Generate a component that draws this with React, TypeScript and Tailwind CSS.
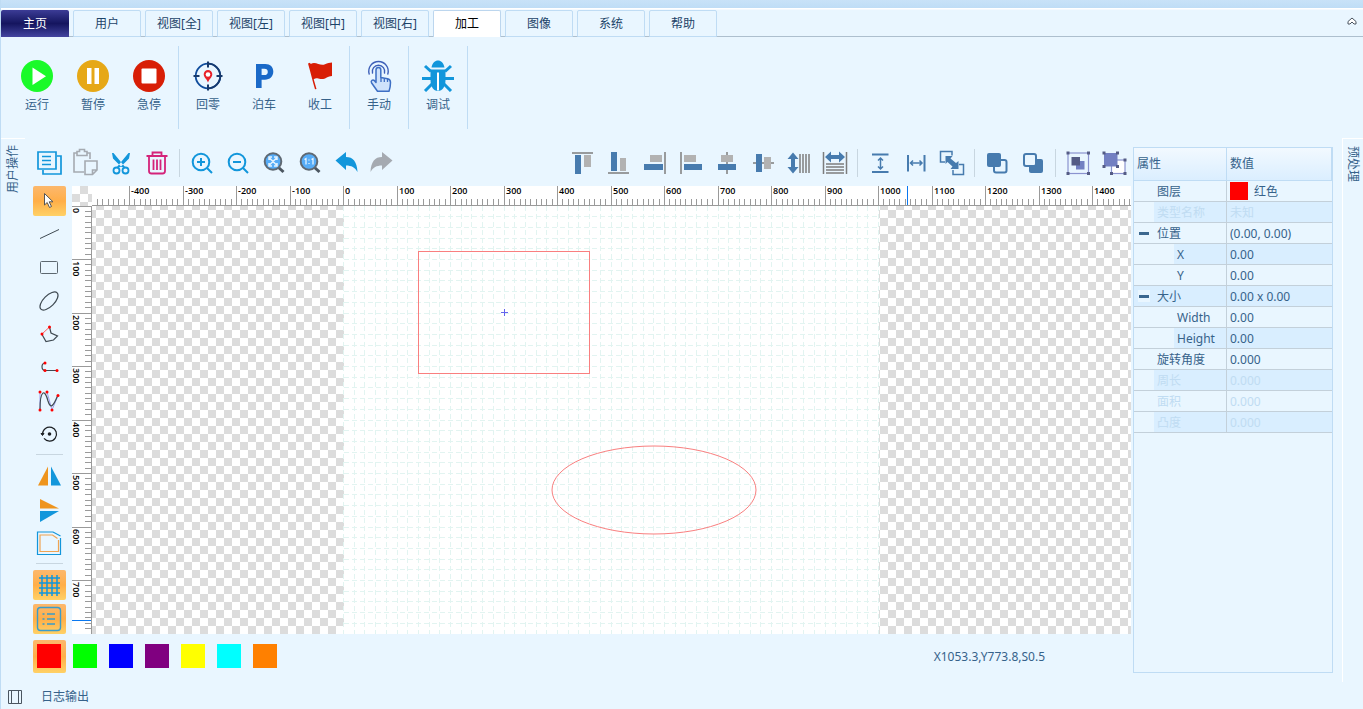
import React, { useLayoutEffect, useRef, useState } from "react";

const BLUE = "#1296db";
const STEEL = "#477bae";
const GRAY = "#b2b2b2";
const RULE = "#7d7d7d";

function Svg({ size = 32, children }: { size?: number; children: React.ReactNode }) {
  return (
    <svg width={size} height={size} viewBox={`0 0 ${size} ${size}`} fill="none" className="shrink-0" aria-hidden="true">
      {children}
    </svg>
  );
}

/* ---------- ribbon ---------- */

const ribbonIcons: Record<string, React.ReactNode> = {
  运行: (
    <Svg>
      <circle cx="16" cy="16" r="16" fill="#1afa29" />
      <path d="M11.5 7.5v17.500l13.500-8.700z" fill="#fff" />
    </Svg>
  ),
  暂停: (
    <Svg>
      <circle cx="16" cy="16" r="16" fill="#e6a817" />
      <path d="M10 8h4.500v16H10zM17.500 8H22v16h-4.500z" fill="#fff" />
    </Svg>
  ),
  急停: (
    <Svg>
      <circle cx="16" cy="16" r="16" fill="#d81e06" />
      <rect x="8.500" y="8.500" width="15" height="15" rx="1" fill="#fff" />
    </Svg>
  ),
  回零: (
    <Svg>
      <circle cx="16" cy="16" r="12.300" stroke="#0f4c9c" strokeWidth="1.800" />
      <path d="M16 3.700a12.300 12.300 0 0 1 0 24.600" stroke="#173a6e" strokeWidth="1.800" />
      <path d="M16 1.500v6M16 24.500v6M1.500 16h6M24.500 16h6" stroke="#17396b" strokeWidth="2" />
      <path d="M16 10a4.300 4.300 0 0 0-4.300 4.300c0 3 3 4.700 4.300 8.200 1.300-3.500 4.300-5.200 4.300-8.200A4.300 4.300 0 0 0 16 10z" fill="#e8212a" />
      <circle cx="16" cy="14.500" r="2.300" fill="#fff" />
    </Svg>
  ),
  泊车: (
    <Svg>
      <path
        fillRule="evenodd"
        d="M8 4H17.300c5 0 8 3 8 7.600 0 4.900-3.400 8.200-8.400 8.200h-3.300V28H8zM13.600 8.800v6.300h2.700c2.300 0 3.500-1.200 3.500-3.200 0-2.100-1.200-3.100-3.400-3.100z"
        fill="#1a69c8"
      />
    </Svg>
  ),
  收工: (
    <Svg>
      <path
        d="M4 3.500l2-.8.7 1.200C12 1 16 6.500 21 4.300c2.500-1 4.500-1.800 7-1.800V16c-4.500.2-7 3.800-11.500 3-3-.5-4.500-1.300-6.800.3l2.800 9.700-1.500.3C8.500 21 6.500 12 4 3.500z"
        fill="#d81e06"
      />
    </Svg>
  ),
  手动: (
    <Svg>
      <path
        d="M13 10c0-3.400 4.800-3.400 4.800 0v7.500l6.700 1.300c2 .5 3 1.700 3 3.700 0 3.200-.4 5.500-1.500 8.700H14.500c-2-2.800-4-5.600-6-8.500-1-2 1.200-3.500 3-2l1.500 1.800z"
        fill="#cfe3fb"
        stroke="#3d6fc4"
        strokeWidth="1.500"
        strokeLinejoin="round"
      />
      <path d="M18 18v4M21.300 18.500v3.500M24.500 19v3" stroke="#3d6fc4" strokeWidth="1.300" />
      <path d="M6.200 14a9.700 9.700 0 1 1 18.600 0M9.500 13a6.200 6.200 0 1 1 12 0" stroke="#3d5fb8" strokeWidth="1.400" strokeLinecap="round" />
    </Svg>
  ),
  调试: (
    <Svg>
      <path d="M9.500 7.500c1.500-9.500 11.500-9.500 13 0zM8.500 9.500h15v10.500c0 6.500-3 11-7.500 11s-7.500-4.500-7.500-11z" fill={BLUE} />
      <path d="M3 6l6 5.500M29 6l-6 5.500M0 18.500h32M3 31l7-7M29 31l-7-7" stroke={BLUE} strokeWidth="3" />
      <path d="M16 12.500v18" stroke="#fff" strokeWidth="2" />
    </Svg>
  ),
};

const ribbonGroups = [["运行", "暂停", "急停"], ["回零", "泊车", "收工"], ["手动"], ["调试"]];
const tabs = ["主页", "用户", "视图[全]", "视图[左]", "视图[中]", "视图[右]", "加工", "图像", "系统", "帮助"];

/* ---------- edit toolbar ---------- */

const corner = (x: number, y: number) => <rect key={`${x}-${y}`} x={x - 1.5} y={y - 1.5} width="3" height="3" fill="#555c85" />;

const editTools: [string, React.ReactNode][] = [
  [
    "复制",
    <>
      <path d="M5 5h18v17H5zM9 9.500h9M9 13.500h9M9 17.500h9" stroke={BLUE} strokeWidth="1.700" />
      <path d="M24 9h4v18H10v-4" stroke={BLUE} strokeWidth="1.700" />
    </>,
  ],
  [
    "粘贴",
    <g stroke="#a5aab1" strokeWidth="1.600">
      <path d="M15 25H5V6h3M18 6h3v6M8 8.500V4.500h2.500V2.500h5v2h2.500v4z" />
      <path d="M16 14h12v9l-4.500 4.500H16zM28 23h-4.500v4.500" />
    </g>,
  ],
  [
    "剪切",
    <>
      <path d="M7 6l1.500 0L18 17.500l2.500 3-4-.5L8 11.500zM25 6h-1.500L14 17.500l-2.500 3 4-.5L24 11.500z" fill={BLUE} />
      <circle cx="11.500" cy="23.500" r="3" stroke={BLUE} strokeWidth="1.800" />
      <circle cx="20.500" cy="23.500" r="3" stroke={BLUE} strokeWidth="1.800" />
    </>,
  ],
  [
    "删除",
    <path
      d="M5.500 9h21M11.500 9V5.500h9V9M8 9v15q0 2.500 2.500 2.500h11q2.500 0 2.500-2.500V9M12.500 12.500v10.500M16 12.500v10.500M19.500 12.500v10.500"
      stroke="#d4237a"
      strokeWidth="1.800"
    />,
  ],
];

const viewTools: [string, React.ReactNode][] = [
  [
    "放大",
    <g stroke={BLUE} strokeWidth="2">
      <circle cx="15" cy="15" r="8.300" />
      <path d="M21 21l5 5M11 15h8M15 11v8" />
    </g>,
  ],
  [
    "缩小",
    <g stroke={BLUE} strokeWidth="2">
      <circle cx="15" cy="15" r="8.300" />
      <path d="M21 21l5 5M11 15h8" />
    </g>,
  ],
  [
    "适合窗口",
    <>
      <path d="M20 20l5.500 5" stroke="#4b5660" strokeWidth="3" />
      <circle cx="15" cy="14.500" r="8.300" fill="#56acf7" stroke="#5f6973" strokeWidth="2" />
      <path d="M11 13v-3h3M16 10h3v3M19 16v3h-3M14 19h-3v-3M11 10.500l8 8M19 10.500l-8 8" stroke="#e4f3ff" strokeWidth="1.500" />
    </>,
  ],
  [
    "实际大小",
    <>
      <path d="M20 20l5.500 5" stroke="#4b5660" strokeWidth="3" />
      <circle cx="15" cy="14.500" r="8.300" fill="#56acf7" stroke="#5f6973" strokeWidth="2" />
      <path d="M10.500 12.500l1.500-1v6M17.500 12.500l1.500-1v6M15 12.500v1M15 16v1" stroke="#f0f8ff" strokeWidth="1.200" />
    </>,
  ],
  ["撤销", <path d="M5.500 13.500L16 5v5c7 0 11 4.500 11.500 15-2.500-4.500-6-6.500-11.500-6.500V23z" fill={BLUE} />],
  ["重做", <path d="M26.500 13.500L16 5v5c-7 0-11 4.500-11.500 15 2.500-4.500 6-6.500 11.500-6.500V23z" fill="#a5aab1" />],
];

const alignTools: [string, React.ReactNode][] = [
  ["顶端对齐", <><path d="M5 6h21" stroke={RULE} strokeWidth="1.500" /><path d="M8 8h6v19H8z" fill={STEEL} /><path d="M17 8h7v12h-7z" fill={GRAY} /></>],
  ["底端对齐", <><path d="M5 26h21" stroke={RULE} strokeWidth="1.500" /><path d="M8 5h6v19H8z" fill={STEEL} /><path d="M17 11h6v13h-6z" fill={GRAY} /></>],
  ["右对齐", <><path d="M26 5v22" stroke={RULE} strokeWidth="1.500" /><path d="M11 8h12v7H11z" fill={GRAY} /><path d="M5 17h19v6H5z" fill={STEEL} /></>],
  ["左对齐", <><path d="M6 5v22" stroke={RULE} strokeWidth="1.500" /><path d="M9 8h12v7H9z" fill={GRAY} /><path d="M9 17h18v6H9z" fill={STEEL} /></>],
  ["水平居中", <><path d="M16 5v22" stroke={RULE} strokeWidth="1.500" /><path d="M10 8h12v7H10z" fill={GRAY} /><path d="M7 17h18v6H7z" fill={STEEL} /></>],
  ["垂直居中", <><path d="M6 16h21" stroke={RULE} strokeWidth="1.500" /><path d="M9 7h6v18H9z" fill={STEEL} /><path d="M17 10h7v12h-7z" fill={GRAY} /></>],
  [
    "等高",
    <>
      <path d="M10 5.500l5.500 6.500H12v8h3.500L10 26.500 4.500 20H8v-8H4.500z" fill={STEEL} />
      <path d="M17 7v19M20 7v19M23 7v19M26 7v19" stroke={RULE} strokeWidth="1.500" />
    </>,
  ],
  [
    "等宽",
    <>
      <path d="M4.500 5v22M27.500 5v22" stroke={RULE} strokeWidth="1.500" />
      <path d="M6 10l6-5.500V8h8V4.500l6 5.500-6 5.500V12h-8v3.500z" fill={STEEL} />
      <path d="M7 17h18M7 20h18M7 23h18M7 26h18" stroke={RULE} strokeWidth="1.500" />
    </>,
  ],
];

const spaceTools: [string, React.ReactNode][] = [
  [
    "垂直间距",
    <>
      <path d="M8 7.500h16.500M8 25h16.500" stroke={STEEL} strokeWidth="2" />
      <path d="M16.500 11v11M14 13.500l2.500-2.500 2.500 2.500M14 19.500l2.500 2.500 2.500-2.500" stroke={STEEL} strokeWidth="1.500" />
    </>,
  ],
  [
    "水平间距",
    <>
      <path d="M8 8v16.500M24.500 8v16.500" stroke={STEEL} strokeWidth="2" />
      <path d="M10.500 16h11.500M13 13.500l-2.500 2.500 2.500 2.500M19.500 13.500l2.500 2.500-2.500 2.500" stroke={STEEL} strokeWidth="1.500" />
    </>,
  ],
  [
    "缩放到",
    <>
      <path d="M9 15H4.500V4.500H16v4M23 17.500h4.500V27.500H17V23" stroke={STEEL} strokeWidth="1.500" />
      <path d="M9.500 9h7l-2 2.500 5.500 4.500 2.500-2v8h-8l2-2.500-5-4.500-2 2z" fill={STEEL} />
    </>,
  ],
];

const orderTools: [string, React.ReactNode][] = [
  [
    "置于顶层",
    <>
      <rect x="13" y="13" width="12.500" height="12.500" rx="2" stroke={STEEL} strokeWidth="2" />
      <rect x="6" y="6" width="14" height="14" rx="2" fill={STEEL} />
    </>,
  ],
  [
    "置于底层",
    <>
      <rect x="12" y="12" width="14" height="14" rx="2" fill={STEEL} />
      <rect x="7" y="7" width="12" height="12" rx="2" fill="#e9f6ff" stroke={STEEL} strokeWidth="2" />
    </>,
  ],
];

const groupTools: [string, React.ReactNode][] = [
  [
    "组合",
    <>
      <rect x="6" y="6" width="20.500" height="20.500" stroke="#8b93cf" strokeWidth="1.200" />
      <path d="M14 14h8.500v8.500H14z" fill="#7380c2" />
      <path d="M9.500 10H18v8.500H9.500z" fill="#555c85" />
      {corner(6, 6)}{corner(26.5, 6)}{corner(6, 26.5)}{corner(26.5, 26.5)}
    </>,
  ],
  [
    "取消组合",
    <>
      <rect x="13.500" y="13" width="13.500" height="13.500" fill="#fff" stroke="#8b93cf" strokeWidth="1.200" />
      <path d="M6 6h13.500v13.500H6z" fill="#7380c2" />
      {corner(6, 6)}{corner(19.5, 6)}{corner(6, 19.5)}{corner(19.5, 19.5)}{corner(27, 13)}{corner(27, 26.5)}{corner(13.5, 26.5)}
    </>,
  ],
];

function ToolGroup({ tools }: { tools: [string, React.ReactNode][] }) {
  return (
    <div className="flex">
      {tools.map(([name, art]) => (
        <button key={name} type="button" aria-label={name} className="flex h-8 w-9 items-center justify-center">
          <Svg>{art}</Svg>
        </button>
      ))}
    </div>
  );
}

const Divider = () => <div className="mx-1 h-7 w-px bg-[#c8d6e0]" />;

/* ---------- drawing tools ---------- */

const INK = "#3f4a52";
const dot = (x: number, y: number) => <circle key={`${x}-${y}`} cx={x} cy={y} r="1.500" fill="#ff0000" />;

const drawTools: [string, React.ReactNode][] = [
  ["选择", <path d="M10.500 7.500v11.500l2.700-2.500 2.300 5 2-1-2.300-4.700h3.800z" fill="#fff" stroke="#555" strokeWidth="1" />],
  ["直线", <path d="M6 19.500l19-9" stroke={INK} />],
  ["矩形", <rect x="6.500" y="8.500" width="17" height="12" rx="1" stroke="#5d6870" />],
  ["椭圆", <ellipse cx="15" cy="15" rx="11.500" ry="5.500" transform="rotate(-45 15 15)" stroke={INK} strokeWidth="1.200" />],
  [
    "多边形",
    <>
      <path d="M15.500 8l1.500 6 6.500 3-4 4-7.500 1.500-4-7" stroke={INK} strokeWidth="1.200" />
      <path d="M8 15l7.500-7" stroke="#ff6060" />
      {dot(8, 15)}{dot(15.5, 8)}
    </>,
  ],
  ["圆弧", <><path d="M11 11c-4 .5-4 7 0 7.500h12" stroke={INK} strokeWidth="1.200" />{dot(11, 11)}{dot(11, 18.5)}{dot(23, 18.5)}</>],
  [
    "曲线",
    <>
      <path d="M6 6v18M13 6l5 18 6-14.500" stroke="#9da0ee" />
      <path d="M6 24C6 3 11 3 14 15c2.500 8 5 6 9.500-5" stroke={INK} strokeWidth="1.200" />
      {dot(6, 6)}{dot(13, 6)}{dot(24, 9.5)}{dot(6, 24)}{dot(18, 24)}
    </>,
  ],
  [
    "旋转",
    <>
      <path d="M8.500 15a7 7 0 1 1 1.500 4.400" stroke="#1c2024" strokeWidth="1.200" />
      <circle cx="15.500" cy="15" r="1.800" fill="#1c2024" />
      <path d="M7 14.500h3l-1.500 2z" fill="#1c2024" stroke="#1c2024" />
    </>,
  ],
];

const mirrorTools: [string, React.ReactNode][] = [
  ["水平镜像", <><path d="M4 23.500h10V4.500z" fill="#ee941d" /><path d="M17 4.500v19h10z" fill={BLUE} /></>],
  ["垂直镜像", <><path d="M6 4v9.500h19z" fill="#ee941d" /><path d="M6 16h19L6 27z" fill={BLUE} /></>],
  [
    "偏移",
    <>
      <path d="M26.500 10v16.500H3.500V4H19l7.500 4" stroke={BLUE} strokeWidth="1.200" />
      <path d="M24.500 12v11.500H6V7h12.500l5 3.500" stroke="#f0a452" strokeWidth="1.200" />
    </>,
  ],
];

const displayTools: [string, React.ReactNode][] = [
  ["网格", <path d="M8 5v21M13 5v21M18 5v21M23 5v21M5 8h21M5 13h21M5 18h21M5 23h21" stroke={BLUE} strokeWidth="1.500" />],
  [
    "列表",
    <>
      <rect x="3.500" y="3.500" width="23" height="23" rx="3" stroke="#3a9cc9" strokeWidth="1.400" />
      <path d="M8.500 10h2M8.500 15h2M8.500 20h2M13 10h8M13 15h8M13 20h8" stroke="#3a9cc9" strokeWidth="1.400" />
    </>,
  ],
];

function DrawButton({ name, art, active, onClick }: { name: string; art: React.ReactNode; active: boolean; onClick?: () => void }) {
  return (
    <button
      type="button"
      aria-label={name}
      aria-pressed={active}
      onClick={onClick}
      className={`flex h-[30px] w-[33px] items-center rounded-xs pl-px ${active ? "bg-linear-to-b from-[#fcb86c] via-[#ffae48] to-[#ffd166]" : ""}`}
    >
      <Svg size={30}>{art}</Svg>
    </button>
  );
}

/* ---------- canvas ---------- */

const UNIT = 0.535;
const ORIGIN_X = 271.5;
const ORIGIN_Y = 20;
const RULER = 20;
const LABEL = 24;

function range(from: number, to: number, step: number) {
  const out: number[] = [];
  for (let v = from; v <= to; v += step) out.push(v);
  return out;
}

function Canvas() {
  const box = useRef<HTMLDivElement>(null);
  const [size, setSize] = useState({ w: 0, h: 0 });

  useLayoutEffect(() => {
    const el = box.current;
    if (!el) return;
    const measure = () => setSize({ w: el.clientWidth, h: el.clientHeight });
    measure();
    const observer = new ResizeObserver(measure);
    observer.observe(el);
    return () => observer.disconnect();
  }, []);

  const { w, h } = size;
  const px = (u: number) => Math.floor(ORIGIN_X + u * UNIT);
  const py = (u: number) => Math.floor(ORIGIN_Y + u * UNIT);
  const maxX = (w - 1 - ORIGIN_X) / UNIT;
  const maxY = (h - 1 - ORIGIN_Y) / UNIT;
  const labelX = (w - LABEL - ORIGIN_X) / UNIT;
  const labelY = (h - LABEL - ORIGIN_Y) / UNIT;
  const bed = 272 + 1000 * UNIT;

  return (
    <div ref={box} className="relative min-h-[448px] min-w-0 flex-1">
      <svg className="absolute inset-0 h-full w-full overflow-visible" role="img" aria-label="绘图区" shapeRendering="crispEdges">
        <defs>
          <pattern id="checker" width="16" height="16" patternUnits="userSpaceOnUse">
            <rect width="16" height="16" fill="#fff" />
            <path d="M8 0h8v8H8zM0 8h8v8H0z" fill="#dcdcdc" />
          </pattern>
        </defs>
        <rect width={w} height={h} fill="url(#checker)" />

        <rect x="272" y={RULER} width={bed - 272} height={Math.max(0, h - RULER)} fill="#fff" />
        <g stroke="#e2f4f1" strokeDasharray="5 3">
          {range(0, 1000, 20).map((u) => (
            <line key={u} x1={px(u) + 0.5} x2={px(u) + 0.5} y1={RULER} y2={h} />
          ))}
          {range(20, maxY, 20).map((u) => (
            <line key={u} x1="272" x2={bed} y1={py(u) + 0.5} y2={py(u) + 0.5} />
          ))}
        </g>

        <g fill="none" stroke="#f97f7f">
          <rect x="346.500" y="65.500" width="171" height="122" />
          <ellipse cx="582" cy="304" rx="102" ry="44" shapeRendering="auto" />
        </g>
        <path d="M429 126.500h7M432.500 123v7" stroke="#6464ee" />

        <rect x={RULER} y="0" width={Math.max(0, w - RULER)} height={RULER} fill="#fff" />
        <rect x="0" y={RULER} width={RULER} height={Math.max(0, h - RULER)} fill="#fff" />
        <g fill="#9a9a9a">
          <rect x={RULER} y="19" width={Math.max(0, w - RULER)} height="1" />
          <rect x="19" y={RULER} width="1" height={Math.max(0, h - RULER)} />
          {range(-460, maxX, 10).map((u) => (
            <rect key={u} x={px(u)} y={u % 100 ? 13 : 0} width="1" height={u % 100 ? 6 : 19} />
          ))}
          {range(0, maxY, 10).map((u) => (
            <rect key={u} x={u % 100 ? 13 : 0} y={py(u)} width={u % 100 ? 6 : 19} height="1" />
          ))}
        </g>
        <g className="fill-black font-['Open_Sans','Noto_Sans',sans-serif] text-[9px] font-semibold">
          {range(-400, labelX, 100).map((u) => (
            <text key={u} x={px(u) + 2} y="8">{u}</text>
          ))}
          {range(0, labelY, 100).map((u) => (
            <text key={u} transform={`translate(1 ${py(u) + 2}) rotate(90)`}>{u}</text>
          ))}
        </g>
        <rect x="835" y="0" width="1" height="19" fill="#0a78f0" />
        <rect x="0" y="434" width="19" height="1" fill="#0a78f0" />
      </svg>
    </div>
  );
}

/* ---------- properties ---------- */

type Row = { name: string; value: string; level: 0 | 1; shade?: boolean; muted?: boolean; open?: boolean; swatch?: boolean };

const rows: Row[] = [
  { name: "图层", value: "红色", level: 0, swatch: true },
  { name: "类型名称", value: "未知", level: 0, shade: true, muted: true },
  { name: "位置", value: "(0.00, 0.00)", level: 0, open: true },
  { name: "X", value: "0.00", level: 1, shade: true },
  { name: "Y", value: "0.00", level: 1 },
  { name: "大小", value: "0.00 x 0.00", level: 0, shade: true, open: true },
  { name: "Width", value: "0.00", level: 1 },
  { name: "Height", value: "0.00", level: 1, shade: true },
  { name: "旋转角度", value: "0.000", level: 0 },
  { name: "周长", value: "0.000", level: 0, shade: true, muted: true },
  { name: "面积", value: "0.000", level: 0, muted: true },
  { name: "凸度", value: "0.000", level: 0, shade: true, muted: true },
];

function Properties() {
  return (
    <section className="mt-[9px] mb-[9px] ml-px w-[200px] shrink-0 border border-[#bfdcf4]" aria-label="属性">
      <table className="w-full table-fixed border-separate border-spacing-0 text-left leading-4">
        <thead>
          <tr className="h-[33px] bg-linear-to-b from-[#f2f9ff] to-[#daeeff]">
            <th className="w-[93px] border-r border-b border-[#bfdcf4] px-[3px] font-normal">属性</th>
            <th className="border-r border-b border-[#bfdcf4] px-[3px] font-normal">数值</th>
          </tr>
        </thead>
        <tbody>
          {rows.map((r) => (
            <tr key={r.name} className={`h-[21px] ${r.muted ? "text-[#c0dcf2]" : ""}`}>
              <th scope="row" className="border-r border-b border-[#c3d0da] p-0 font-normal">
                <div className={`flex h-5 ${r.shade && r.open ? "bg-[#d9eeff]" : ""}`}>
                  <span className={`flex shrink-0 items-center pl-1 ${r.level === 1 ? "w-10" : "w-5"}`}>
                    {r.open && (
                      <button type="button" aria-label={`折叠${r.name}`} className="flex h-3 w-3 items-center justify-center bg-[#e9f6ff]">
                        <span className="h-[3px] w-[10px] bg-[#3c688f]" />
                      </button>
                    )}
                  </span>
                  <span className={`flex flex-1 items-center pt-0.5 pl-[3px] ${r.shade ? "bg-[#d9eeff]" : ""}`}>{r.name}</span>
                </div>
              </th>
              <td className="border-b border-[#c3d0da] p-0">
                <div className={`flex h-5 items-center gap-1.5 pl-[3px] ${r.shade ? "bg-[#d9eeff]" : ""}`}>
                  {r.swatch && <span className="h-[18px] w-[18px] bg-[#ff0000]" />}
                  <span className="pt-0.5">{r.value}</span>
                </div>
              </td>
            </tr>
          ))}
        </tbody>
      </table>
    </section>
  );
}

/* ---------- layers ---------- */

const layers = [
  ["红色", "bg-[#ff0000]"],
  ["绿色", "bg-[#00ff00]"],
  ["蓝色", "bg-[#0000ff]"],
  ["紫色", "bg-[#800080]"],
  ["黄色", "bg-[#ffff00]"],
  ["青色", "bg-[#00ffff]"],
  ["橙色", "bg-[#ff8000]"],
];

export default function App() {
  const [tab, setTab] = useState("加工");
  const [tool, setTool] = useState("选择");
  const [layer, setLayer] = useState("红色");

  return (
    <div className="flex min-h-screen flex-col border-l border-[#bfdcf4] bg-[#e9f6ff] font-['Noto_Sans','Noto_Sans_CJK_SC',sans-serif] text-xs text-[#36628a]">
      <div className="h-2 bg-linear-to-b from-[#c8e2f8] to-[#bfddf6]" />
      <nav className="flex h-[29px] items-end border-t border-white border-b border-b-[#adbfce] shadow-[inset_0_1px_0_#f5faff]">
        <div role="tablist" className="-mb-px flex gap-1">
          {tabs.map((t) => {
            const look =
              t === "主页"
                ? "bg-linear-to-b from-[#3c3c96] via-[#15155f] to-[#4444a0] text-white"
                : t === tab
                  ? "border border-b-0 border-[#bcd6ee] bg-white text-black"
                  : "border border-[#bfdcf4] text-[#1c4368]";
            return (
              <button
                key={t}
                type="button"
                role="tab"
                aria-selected={t === tab}
                onClick={() => setTab(t)}
                className={`h-[27px] w-[68px] rounded-t-xs ${look}`}
              >
                {t}
              </button>
            );
          })}
        </div>
        <button type="button" aria-label="收起功能区" className="mr-1.5 mb-2.5 ml-auto">
          <svg width="10" height="9" viewBox="0 0 10 9" fill="#fff" stroke="#4a5560" aria-hidden="true">
            <path d="M5 1l4 3.500v2.500H7L5 5 3 7H1V4.500z" />
          </svg>
        </button>
      </nav>

      <div className="flex h-[101px] pt-[9px] pb-[9px] pl-2">
        {ribbonGroups.map((g) => (
          <div key={g[0]} className="mr-px flex border-r border-[#bfdcf4] pr-px">
            {g.map((name) => (
              <button key={name} type="button" className="flex w-14 flex-col items-center gap-[5px] pt-3.5 leading-4">
                {ribbonIcons[name]}
                {name}
              </button>
            ))}
          </div>
        ))}
      </div>

      <div className="flex flex-1">
        <aside className="mr-1.5 w-6 shrink-0 border-t border-white">
          <button type="button" className="rotate-180 pr-1 pb-1.5 leading-4 [text-orientation:sideways] [writing-mode:vertical-rl]">
            用户操作
          </button>
        </aside>

        <main className="flex min-w-0 flex-1 flex-col pt-[9px] pb-[9px]">
          <div role="toolbar" aria-label="编辑" className="flex h-8 items-center justify-between">
            <div className="flex items-center">
              <ToolGroup tools={editTools} />
              <Divider />
              <ToolGroup tools={viewTools} />
            </div>
            <div className="flex items-center">
              <ToolGroup tools={alignTools} />
              <Divider />
              <ToolGroup tools={spaceTools} />
              <Divider />
              <ToolGroup tools={orderTools} />
              <Divider />
              <ToolGroup tools={groupTools} />
            </div>
          </div>

          <div className="mt-[7px] mr-px flex flex-1 gap-1.5 pl-0.5">
            <div role="toolbar" aria-label="绘图" className="flex w-[33px] shrink-0 flex-col items-center">
              <div className="flex h-[263px] flex-col justify-between">
                {drawTools.map(([name, art]) => (
                  <DrawButton key={name} name={name} art={art} active={tool === name} onClick={() => setTool(name)} />
                ))}
              </div>
              <div className="mt-[5px] mb-[7px] h-px w-[27px] bg-[#c8d6e0]" />
              <div className="flex flex-col gap-[3px]">
                {mirrorTools.map(([name, art]) => (
                  <DrawButton key={name} name={name} art={art} active={false} />
                ))}
              </div>
              <div className="mt-[5px] mb-1.5 h-px w-[27px] bg-[#c8d6e0]" />
              <div className="flex flex-col gap-1">
                {displayTools.map(([name, art]) => (
                  <DrawButton key={name} name={name} art={art} active />
                ))}
              </div>
            </div>
            <Canvas />
          </div>

          <div className="mt-1.5 flex items-center justify-between pl-0.5">
            <div className="flex gap-[3px]">
              {layers.map(([name, color]) => (
                <button
                  key={name}
                  type="button"
                  aria-label={name}
                  aria-pressed={layer === name}
                  onClick={() => setLayer(name)}
                  className={`flex h-[33px] w-[33px] items-start rounded-xs p-1 ${layer === name ? "bg-linear-to-b from-[#fcb86c] via-[#ffae48] to-[#ffd166]" : ""}`}
                >
                  <span className={`h-6 w-6 ${color}`} />
                </button>
              ))}
            </div>
            <output className="mr-[87px]">X1053.3,Y773.8,S0.5</output>
          </div>
        </main>

        <Properties />

        <aside className="ml-[9px] w-[21px] shrink-0 border-t border-l border-white">
          <button type="button" className="pt-[7px] pl-0.5 leading-4 [text-orientation:sideways] [writing-mode:vertical-rl]">
            预处理
          </button>
        </aside>
      </div>

      <footer className="flex h-[27px] items-center gap-[18px] pt-[3px] pl-[7px]">
        <svg width="15" height="14" viewBox="0 0 15 14" fill="none" stroke="#4a5560" aria-hidden="true">
          <path d="M.5.5h13v13H.5zM3.500.5v13M10.500.5v13" />
        </svg>
        <button type="button">日志输出</button>
      </footer>
    </div>
  );
}
